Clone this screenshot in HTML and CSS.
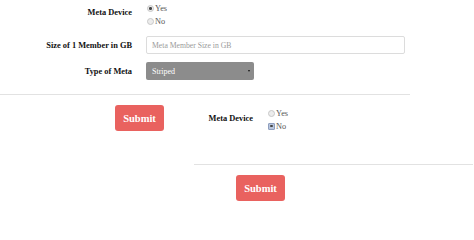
FILE: index.html
```html
<!DOCTYPE html>
<html>
<head>
<meta charset="utf-8">
<link rel="stylesheet" href="styles.css">
</head>
<body>
<form class="form-one">
  <div class="row row-radio">
    <div class="label">Meta Device</div>
    <div class="radios">
      <div class="radio"><span class="dot checked"></span>Yes</div>
      <div class="radio"><span class="dot"></span>No</div>
    </div>
  </div>
  <div class="row row-input">
    <div class="label">Size of 1 Member in GB</div>
    <div class="input">Meta Member Size in GB</div>
  </div>
  <div class="row row-select">
    <div class="label">Type of Meta</div>
    <div class="select"><span>Striped</span><span class="caret"></span></div>
  </div>
  <div class="rule rule-one"></div>
</form>
<div class="bottom">
  <div class="left">
    <button type="button" class="btn btn-one">Submit</button>
  </div>
  <form class="form-two">
    <div class="row2">
      <div class="label label2">Meta Device</div>
      <div class="radios radios2">
        <div class="radio"><span class="dot"></span>Yes</div>
        <div class="radio"><span class="dot sq checked"></span>No</div>
      </div>
    </div>
    <div class="rule rule-two"></div>
    <button type="button" class="btn btn-two">Submit</button>
  </form>
</div>
</body>
</html>
```
FILE: styles.css
```css
html, body {
  margin: 0;
  padding: 0;
  background: #ffffff;
}
body {
  width: 474px;
  height: 225px;
  overflow: hidden;
  font-family: "Liberation Serif", "DejaVu Serif", serif;
  color: #222;
}
.form-one {
  width: 410px;
  padding-top: 3px;
}
.row {
  display: grid;
  grid-template-columns: 132px 1fr;
  column-gap: 14px;
  align-items: center;
}
.label {
  text-align: right;
  font-weight: bold;
  font-size: 8.4px;
  color: #111;
  white-space: nowrap;
}
.row-radio {
  height: 23px;
  align-items: start;
}
.row-radio .label {
  padding-top: 5px;
}
.radios {
  display: flex;
  flex-direction: column;
  gap: 3.5px;
  padding-top: 1px;
}
.radio {
  display: flex;
  align-items: center;
  font-size: 8.3px;
  color: #555;
  height: 9px;
  line-height: 9px;
}
.dot {
  width: 5px;
  height: 5px;
  border-radius: 50%;
  border: 0.5px solid #c8c8c8;
  background: #ececec;
  margin-right: 1px;
  margin-left: 1px;
  display: inline-flex;
  align-items: center;
  justify-content: center;
}
.dot.checked::after {
  content: "";
  width: 2.5px;
  height: 2.5px;
  border-radius: 50%;
  background: #444;
}
.dot.sq {
  border-radius: 1px;
  background: #b9c6dd;
  border-color: #8f9fbf;
}
.row-input {
  margin-top: 10px;
}
.input {
  height: 18px;
  border: 1px solid #dcdcdc;
  border-radius: 2px;
  box-sizing: border-box;
  margin-right: 5px;
  font-size: 7.7px;
  color: #9a9a9a;
  padding-left: 5px;
  display: flex;
  align-items: center;
}
.row-select {
  margin-top: 8px;
}
.select {
  width: 108px;
  height: 18px;
  box-sizing: border-box;
  background: #8c8c8c;
  border-radius: 2px;
  color: #ffffff;
  font-size: 8px;
  padding: 0 4px 0 6px;
  display: flex;
  align-items: center;
  justify-content: space-between;
}
.caret {
  width: 0;
  height: 0;
  border-left: 1.5px solid transparent;
  border-right: 1.5px solid transparent;
  border-top: 2.5px solid #111;
}
.rule {
  border-top: 1px solid #e2e2e2;
}
.rule-one {
  margin-top: 14px;
}
.bottom {
  display: flex;
  align-items: flex-start;
}
.left {
  width: 194px;
  flex: none;
}
.btn {
  display: block;
  width: 49px;
  height: 26px;
  border: none;
  border-radius: 3px;
  background: #e9625f;
  color: #ffffff;
  font-family: "Liberation Serif", "DejaVu Serif", serif;
  font-weight: bold;
  font-size: 10.5px;
  padding: 0;
}
.btn-one {
  margin-top: 10px;
  margin-left: 115px;
}
.form-two {
  flex: 1;
  padding-top: 14px;
}
.row2 {
  display: flex;
  align-items: flex-start;
  height: 49px;
}
.label2 {
  width: 59px;
  padding-top: 5px;
}
.radios2 {
  margin-left: 14px;
  padding-top: 0;
}
.rule-two {
  margin-top: 6px;
  margin-right: 1px;
}
.btn-two {
  margin-top: 10px;
  margin-left: 42px;
}
```
